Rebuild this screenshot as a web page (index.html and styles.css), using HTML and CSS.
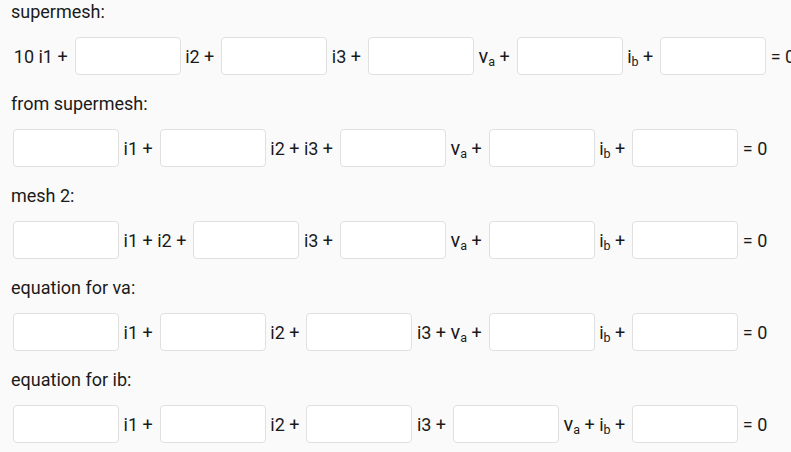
FILE: index.html
```html
<!DOCTYPE html>
<html>
<head>
<meta charset="utf-8">
<link rel="stylesheet" href="styles.css">
</head>
<body>
<div class="page">
  <section class="block">
    <div class="heading">supermesh:</div>
    <div class="row">
      <span class="term lead">10 i1 +</span><input class="box" type="text">
      <span class="term">i2 +</span><input class="box" type="text">
      <span class="term">i3 +</span><input class="box" type="text">
      <span class="term"><span class="v">v</span><sub>a</sub> +</span><input class="box" type="text">
      <span class="term">i<sub>b</sub> +</span><input class="box" type="text">
      <span class="term">= 0</span>
    </div>
  </section>
  <section class="block">
    <div class="heading">from supermesh:</div>
    <div class="row">
      <input class="box" type="text"><span class="term">i1 +</span>
      <input class="box" type="text"><span class="term">i2 + i3 +</span>
      <input class="box" type="text"><span class="term"><span class="v">v</span><sub>a</sub> +</span>
      <input class="box" type="text"><span class="term">i<sub>b</sub> +</span>
      <input class="box" type="text"><span class="term">= 0</span>
    </div>
  </section>
  <section class="block">
    <div class="heading">mesh 2:</div>
    <div class="row">
      <input class="box" type="text"><span class="term">i1 + i2 +</span>
      <input class="box" type="text"><span class="term">i3 +</span>
      <input class="box" type="text"><span class="term"><span class="v">v</span><sub>a</sub> +</span>
      <input class="box" type="text"><span class="term">i<sub>b</sub> +</span>
      <input class="box" type="text"><span class="term">= 0</span>
    </div>
  </section>
  <section class="block">
    <div class="heading">equation for va:</div>
    <div class="row">
      <input class="box" type="text"><span class="term">i1 +</span>
      <input class="box" type="text"><span class="term">i2 +</span>
      <input class="box" type="text"><span class="term">i3 + <span class="v">v</span><sub>a</sub> +</span>
      <input class="box" type="text"><span class="term">i<sub>b</sub> +</span>
      <input class="box" type="text"><span class="term">= 0</span>
    </div>
  </section>
  <section class="block">
    <div class="heading">equation for ib:</div>
    <div class="row">
      <input class="box" type="text"><span class="term">i1 +</span>
      <input class="box" type="text"><span class="term">i2 +</span>
      <input class="box" type="text"><span class="term">i3 +</span>
      <input class="box" type="text"><span class="term"><span class="v">v</span><sub>a</sub> + i<sub>b</sub> +</span>
      <input class="box" type="text"><span class="term">= 0</span>
    </div>
  </section>
</div>
</body>
</html>
```

FILE: styles.css
```css
html, body {
  margin: 0;
  padding: 0;
  background: #fafafa;
  overflow: hidden;
}

.page {
  padding-left: 11px;
  font-family: Roboto, "Liberation Sans", sans-serif;
  font-size: 18px;
  color: #1a1a1a;
}

.block {
  margin-bottom: 17px;
}

.heading {
  height: 24px;
  line-height: 24px;
  margin-bottom: 13px;
  white-space: nowrap;
}

.row {
  display: flex;
  align-items: center;
  height: 38px;
  white-space: nowrap;
}

.term {
  flex: none;
  margin: 0 4.9px 0 4.6px;
  line-height: 21px;
}

.term.lead {
  margin-left: 2.8px;
}

.v {
  font-size: 20px;
}

sub {
  font-size: 12.5px;
  line-height: 0;
  vertical-align: -3px;
}

.box {
  flex: none;
  box-sizing: border-box;
  width: 106px;
  height: 38px;
  margin: 0 0 0 2px;
  padding: 0 8px;
  border: 1px solid #e0e0e0;
  border-radius: 4px;
  background: #fff;
  font: inherit;
  outline: none;
}
```
